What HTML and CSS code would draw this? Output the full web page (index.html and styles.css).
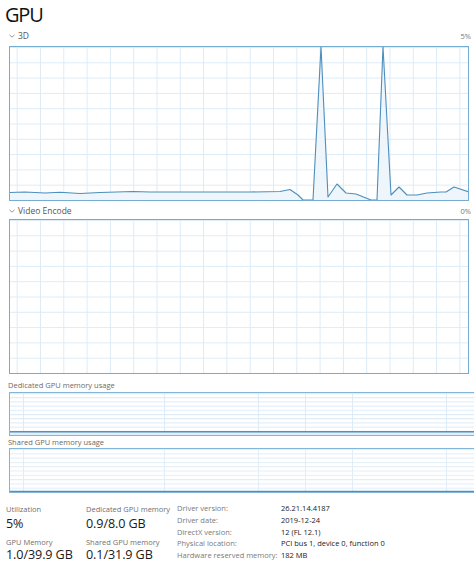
FILE: index.html
```html
<!DOCTYPE html>
<html>
<head>
<meta charset="utf-8">
<link rel="stylesheet" href="styles.css">
</head>
<body>
<div class="page">
  <h1 class="title">GPU</h1>

  <div class="section-head head-3d">
    <span class="name"><svg class="chev" width="6" height="4" viewBox="0 0 6 4"><polyline points="0.5,0.8 3,3.2 5.5,0.8" fill="none" stroke="#8a8a8a" stroke-width="0.9"/></svg>3D</span>
    <span class="pct">5%</span>
  </div>
  <div class="graph graph-big">
    <svg width="458" height="153" viewBox="0 0 458 153">
      <defs>
        <pattern id="g3d" patternUnits="userSpaceOnUse" x="6.7" y="0" width="23.3" height="15.3">
          <path d="M0.5 0 V15.3 M0 0.5 H23.3" stroke="#dcebf6" stroke-width="1" fill="none"/>
        </pattern>
      </defs>
      <rect width="458" height="153" fill="url(#g3d)"/>
      <polygon class="fill" points="-1,145.5 15,145 35,146 50,145.3 70,146.5 90,145.5 123,144.5 140,145 190,145 240,145 270,144.5 280,142.5 288,148 293,153 303,153 311,-0.5 318,150 327,137 336,146 346,147 361,153 367,153 373,-0.5 381,148 389,140 397,148 407,148 417,146 431,145 436,145 444,140 459,145 459,153 -1,153"/>
      <polyline class="line" points="-1,145.5 15,145 35,146 50,145.3 70,146.5 90,145.5 123,144.5 140,145 190,145 240,145 270,144.5 280,142.5 288,148 293,153 303,153 311,-0.5 318,150 327,137 336,146 346,147 361,153 367,153 373,-0.5 381,148 389,140 397,148 407,148 417,146 431,145 436,145 444,140 459,145"/>
    </svg>
  </div>

  <div class="section-head head-video">
    <span class="name"><svg class="chev" width="6" height="4" viewBox="0 0 6 4"><polyline points="0.5,0.8 3,3.2 5.5,0.8" fill="none" stroke="#8a8a8a" stroke-width="0.9"/></svg>Video Encode</span>
    <span class="pct">0%</span>
  </div>
  <div class="graph graph-big">
    <svg width="458" height="153" viewBox="0 0 458 153">
      <defs>
        <pattern id="gve" patternUnits="userSpaceOnUse" x="6.7" y="0" width="23.3" height="15.3">
          <path d="M0.5 0 V15.3 M0 0.5 H23.3" stroke="#dcebf6" stroke-width="1" fill="none"/>
        </pattern>
      </defs>
      <rect width="458" height="153" fill="url(#gve)"/>
    </svg>
  </div>

  <div class="mem-label mem-ded">Dedicated GPU memory usage</div>
  <div class="graph graph-mem graph-ded">
    <svg width="478" height="42" viewBox="0 0 478 42">
      <defs>
        <pattern id="gded" patternUnits="userSpaceOnUse" x="13" y="0" width="47" height="4.2">
          <path d="M0.5 0 V4.2 M0 0.5 H47" stroke="#dcebf6" stroke-width="1" fill="none"/>
        </pattern>
      </defs>
      <rect width="478" height="42" fill="url(#gded)"/>
      <rect x="0" y="38.5" width="478" height="3.5" fill="#e3eff8"/>
      <line x1="0" y1="38.7" x2="478" y2="38.7" stroke="#4f92c2" stroke-width="1.4"/>
    </svg>
  </div>

  <div class="mem-label mem-shared">Shared GPU memory usage</div>
  <div class="graph graph-mem graph-shared">
    <svg width="478" height="43" viewBox="0 0 478 43">
      <defs>
        <pattern id="gsh" patternUnits="userSpaceOnUse" x="13" y="0" width="47" height="4.3">
          <path d="M0.5 0 V4.3 M0 0.5 H47" stroke="#e2eef7" stroke-width="1" fill="none"/>
        </pattern>
      </defs>
      <rect width="478" height="43" fill="url(#gsh)"/>
      <line x1="0" y1="42.4" x2="478" y2="42.4" stroke="#4f92c2" stroke-width="1.2"/>
    </svg>
  </div>

  <div class="stats">
    <div class="stat-col col-a">
      <div class="stat-label">Utilization</div>
      <div class="stat-value">5%</div>
      <div class="stat-label second">GPU Memory</div>
      <div class="stat-value tight">1.0/39.9 GB</div>
    </div>
    <div class="stat-col col-b">
      <div class="stat-label">Dedicated GPU memory</div>
      <div class="stat-value">0.9/8.0 GB</div>
      <div class="stat-label second">Shared GPU memory</div>
      <div class="stat-value tight">0.1/31.9 GB</div>
    </div>
    <div class="details">
      <div class="d-label">Driver version:</div><div class="d-value">26.21.14.4187</div>
      <div class="d-label">Driver date:</div><div class="d-value">2019-12-24</div>
      <div class="d-label">DirectX version:</div><div class="d-value">12 (FL 12.1)</div>
      <div class="d-label">Physical location:</div><div class="d-value">PCI bus 1, device 0, function 0</div>
      <div class="d-label">Hardware reserved memory:</div><div class="d-value">182 MB</div>
    </div>
  </div>
</div>
</body>
</html>
```

FILE: styles.css
```css
html, body {
  margin: 0;
  padding: 0;
  background: #ffffff;
}

body {
  width: 474px;
  height: 583px;
  overflow: hidden;
  font-family: "Open Sans", "Noto Sans", sans-serif;
  color: #1a1a1a;
}

.page {
  width: 474px;
  overflow: hidden;
}

.title {
  margin: 0;
  padding-left: 5px;
  font-size: 20px;
  font-weight: 400;
  line-height: 30px;
  height: 30px;
  color: #111;
  letter-spacing: -1.2px;
}

.section-head {
  display: flex;
  justify-content: space-between;
  align-items: center;
  height: 12px;
  line-height: 12px;
  font-size: 8.5px;
  color: #555;
  padding: 0 3px 0 9px;
}

.section-head .name {
  display: flex;
  align-items: center;
}

.chev {
  display: block;
  margin-right: 3px;
}

.section-head .pct {
  font-size: 7.5px;
  color: #777;
}

.head-3d {
  margin-bottom: 4px;
}

.head-video {
  margin-top: 4px;
  margin-bottom: 2px;
}

.graph {
  box-sizing: border-box;
  margin-left: 9px;
  border: 1px solid #74acd3;
  background: #fff;
}

.graph svg {
  display: block;
}

.graph-big {
  width: 460px;
  height: 155px;
}

.graph-mem {
  width: 480px;
  border-color: #82b5d8;
}

.graph-ded {
  height: 44px;
}

.graph-shared {
  height: 45px;
}

.fill {
  fill: #eef5fb;
  stroke: none;
}

.line {
  fill: none;
  stroke: #4c8fbd;
  stroke-width: 1.1;
  stroke-linejoin: round;
}

.mem-label {
  font-size: 7.5px;
  line-height: 11px;
  height: 11px;
  color: #6e6a62;
  padding-left: 8px;
}

.mem-ded {
  margin-top: 6px;
  margin-bottom: 1px;
}

.mem-shared {
  margin-top: 1px;
}

.stats {
  display: flex;
  margin-top: 11px;
  padding-left: 6px;
}

.stat-col {
  display: flex;
  flex-direction: column;
}

.col-a {
  width: 80px;
}

.col-b {
  width: 91px;
}

.stat-label {
  font-size: 7.5px;
  line-height: 10px;
  height: 10px;
  color: #707070;
}

.stat-label.second {
  margin-top: 5px;
}

.stat-value {
  font-size: 12.6px;
  line-height: 16px;
  height: 16px;
  margin-top: 2px;
  color: #1a1a1a;
  white-space: nowrap;
  letter-spacing: -0.1px;
}

.stat-value.tight {
  margin-top: 0;
}

.details {
  display: grid;
  grid-template-columns: 104px auto;
  grid-auto-rows: 11.75px;
  margin-top: -1px;
  font-size: 7.5px;
  line-height: 11.75px;
  white-space: nowrap;
}

.d-label {
  color: #7a7a7a;
}

.d-value {
  color: #222;
}
```
